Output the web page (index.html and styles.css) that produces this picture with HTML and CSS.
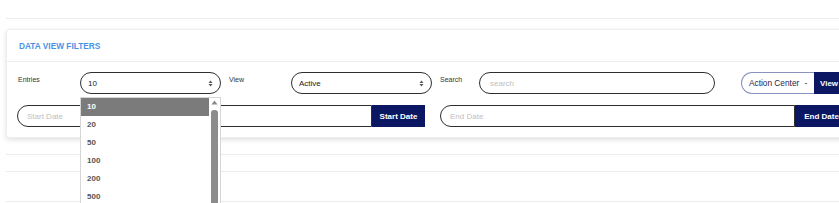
FILE: index.html
```html
<!DOCTYPE html>
<html>
<head>
<meta charset="utf-8">
<link rel="stylesheet" href="styles.css">
</head>
<body>
<div class="page">
  <div class="rule top-rule"></div>
  <div class="card">
    <div class="card-header">DATA VIEW FILTERS</div>
    <div class="card-body">
      <div class="row row-one">
        <div class="group g-entries">
          <span class="label">Entries</span>
          <div class="select w-select">
            <span class="value">10</span>
            <svg class="updown" width="5" height="7" viewBox="0 0 5 7"><path d="M2.5 0.5 L4.5 3 L0.5 3 Z M2.5 6.5 L4.5 4 L0.5 4 Z" fill="#555"/></svg>
          </div>
        </div>
        <div class="group g-view">
          <span class="label">View</span>
          <div class="select w-select">
            <span class="value">Active</span>
            <svg class="updown" width="5" height="7" viewBox="0 0 5 7"><path d="M2.5 0.5 L4.5 3 L0.5 3 Z M2.5 6.5 L4.5 4 L0.5 4 Z" fill="#555"/></svg>
          </div>
        </div>
        <div class="group g-search">
          <span class="label">Search</span>
          <div class="input w-search"><span class="ph">search</span></div>
        </div>
        <div class="btn-group">
          <button class="btn-outline">Action Center <span class="caret">-</span></button>
          <button class="btn-navy btn-view">View</button>
        </div>
      </div>
      <div class="row row-two">
        <div class="date-group">
          <div class="input date-input"><span class="ph">Start Date</span></div>
          <button class="btn-navy btn-date">Start Date</button>
        </div>
        <div class="date-group">
          <div class="input date-input"><span class="ph">End Date</span></div>
          <button class="btn-navy btn-date">End Date</button>
        </div>
      </div>
    </div>
  </div>
  <div class="rule rule-a"></div>
  <div class="rule rule-b"></div>
  <div class="rule rule-c"></div>

  <div class="dropdown">
    <div class="options">
      <div class="opt selected">10</div>
      <div class="opt">20</div>
      <div class="opt">50</div>
      <div class="opt">100</div>
      <div class="opt">200</div>
      <div class="opt">500</div>
    </div>
    <div class="scrollbar">
      <svg class="arrow-up" width="7" height="5" viewBox="0 0 7 5"><path d="M3.5 0.5 L6.5 4.5 L0.5 4.5 Z" fill="#8a8a8a"/></svg>
      <div class="thumb"></div>
    </div>
  </div>
</div>
</body>
</html>
```

FILE: styles.css
```css
* { box-sizing: border-box; }
html, body { margin: 0; padding: 0; background: #fff; overflow: hidden; }
body {
  font-family: "Liberation Sans", Arial, sans-serif;
  color: #333;
  width: 839px;
  height: 203px;
}
.page {
  position: relative;
  padding: 18px 0 0 6px;
  width: 880px;
}
.rule { height: 1px; background: #ececec; }
.top-rule { margin-bottom: 10px; }
.card {
  width: 860px;
  background: #fff;
  border: 1px solid #eeeeee;
  border-radius: 3px;
  box-shadow: 0 2px 5px rgba(0,0,0,0.12);
}
.card-header {
  height: 32px;
  padding: 11px 0 0 12px;
  font-size: 8.3px;
  font-weight: bold;
  color: #4a92e8;
  border-bottom: 1px solid #ececec;
}
.card-body { padding: 10px 0 10px 10px; }
.row { display: flex; align-items: flex-start; }
.row-one { height: 22px; margin-bottom: 11px; }
.group { display: flex; align-items: flex-start; margin-right: 8px; }
.label { font-size: 7px; color: #333; padding-top: 4px; }
.g-entries .label { width: 63px; padding-left: 1px; }
.g-view .label { width: 62px; }
.g-search .label { width: 39px; }
.select, .input {
  height: 22px;
  border: 1px solid #2f2f2f;
  border-radius: 11px;
  display: flex;
  align-items: center;
  font-size: 8px;
  background: #fff;
}
.w-select { width: 141px; padding: 0 7px 0 7px; justify-content: space-between; }
.value { color: #222; }
.updown { display: block; }
.w-search { width: 236px; padding-left: 10px; }
.ph { color: #c0c0c0; font-size: 8px; }
.btn-group { display: flex; margin-left: 18px; height: 22px; }
.btn-outline {
  height: 22px;
  width: 73px;
  border: 1px solid #8a93c0;
  border-right: none;
  border-radius: 11px 0 0 11px;
  background: #fff;
  color: #1a2450;
  font-family: inherit;
  font-size: 8.3px;
  padding: 0 0 0 7px;
  text-align: left;
}
.caret { margin-left: 3px; }
.btn-navy {
  background: #0c1763;
  color: #fff;
  border: none;
  font-family: inherit;
  font-weight: bold;
  font-size: 8px;
  padding: 0;
}
.btn-view { width: 40px; height: 22px; text-align: left; padding-left: 6px; }
.row-two { gap: 15px; }
.date-group { display: flex; width: 408px; height: 22px; }
.date-input {
  flex: 1;
  border-radius: 11px 0 0 11px;
  padding-left: 9px;
}
.btn-date { width: 53px; height: 22px; }
.rule-a { margin-top: 16px; }
.rule-b { margin-top: 16px; }
.rule-c { margin-top: 29px; }

.dropdown {
  position: absolute;
  left: 80px;
  top: 97px;
  width: 141px;
  height: 110px;
  background: #fff;
  border: 1px solid #d6d6d6;
  display: flex;
}
.options { width: 128px; }
.opt {
  height: 18px;
  line-height: 18px;
  padding-left: 6px;
  font-size: 8px;
  font-weight: bold;
  color: #555;
}
.opt.selected { background: #7b7b7b; color: #fff; }
.scrollbar {
  width: 11px;
  display: flex;
  flex-direction: column;
  align-items: center;
  padding-top: 2px;
}
.arrow-up { display: block; }
.thumb {
  margin-top: 5px;
  width: 7px;
  flex: 1;
  background: #8c8c8c;
  border-radius: 3px 3px 0 0;
}
```
